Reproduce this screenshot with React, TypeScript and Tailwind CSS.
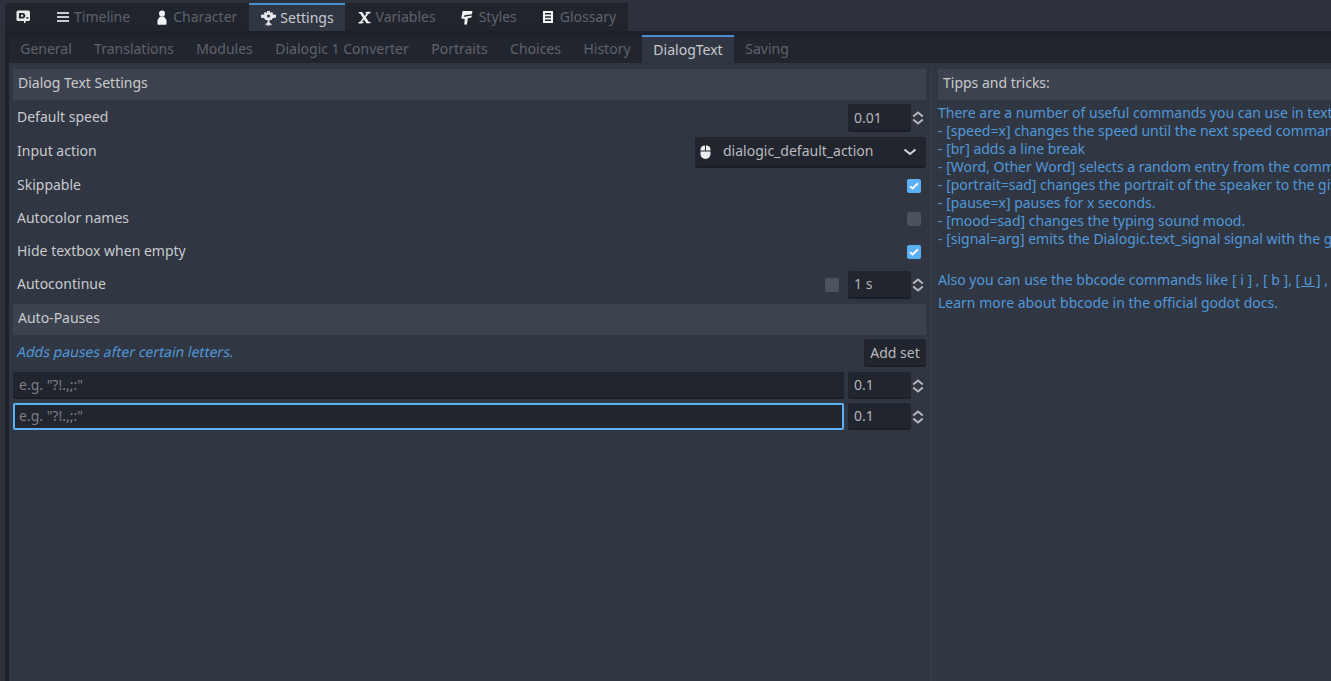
const mainTabs = [
  { label: "Timeline", icon: <TimelineIcon /> },
  { label: "Character", icon: <CharacterIcon /> },
  { label: "Settings", icon: <SettingsIcon />, active: true },
  { label: "Variables", icon: <VariablesIcon /> },
  { label: "Styles", icon: <StylesIcon /> },
  { label: "Glossary", icon: <GlossaryIcon /> },
];

const subTabs = [
  { label: "General", width: "w-[74px]" },
  { label: "Translations", width: "w-[102px]" },
  { label: "Modules", width: "w-[79px]" },
  { label: "Dialogic 1 Converter", width: "w-[156px]" },
  { label: "Portraits", width: "w-[79px]" },
  { label: "Choices", width: "w-[73px]" },
  { label: "History", width: "w-[70px]" },
  { label: "DialogText", width: "w-[92px]" },
  { label: "Saving", width: "w-[66px]" },
];

const tips = [
  "There are a number of useful commands you can use in texts:",
  "- [speed=x] changes the speed until the next speed command.",
  "- [br] adds a line break",
  "- [Word, Other Word] selects a random entry from the comma separated list.",
  "- [portrait=sad] changes the portrait of the speaker to the given one.",
  "- [pause=x] pauses for x seconds.",
  "- [mood=sad] changes the typing sound mood.",
  "- [signal=arg] emits the Dialogic.text_signal signal with the given argument.",
];

function LogoIcon() {
  return (
    <svg width="15" height="14" viewBox="0 0 15 14" fill="none">
      <path
        fillRule="evenodd"
        d="M2 0.5h10a2 2 0 0 1 2 2v7a1.500 1.500 0 0 1-1.500 1.500H9.500v2h-1.500v-2H2a1.500 1.500 0 0 1-1.500-1.500V2A1.500 1.500 0 0 1 2 0.500ZM3 3v5.500h3.500a2.750 2.750 0 0 0 0-5.500ZM5 4.700h1.300a1 1 0 0 1 0 2.100H5ZM10.500 7v1.800h1.800V7Z"
        fill="#e9eaeb"
      />
    </svg>
  );
}

function TimelineIcon() {
  return (
    <svg width="12" height="12" viewBox="0 0 12 12" fill="#c9cbce">
      <rect x="0" y="1" width="12" height="2" />
      <rect x="0" y="5" width="12" height="2" />
      <rect x="0" y="9" width="12" height="2" />
    </svg>
  );
}

function CharacterIcon() {
  return (
    <svg width="10" height="15" viewBox="0 0 10 15" fill="#f2f3f4">
      <circle cx="5" cy="3.500" r="3" />
      <path d="M3 6.500h4L9.500 10v4a.7.7 0 0 1-.7.700H1.200A.7.7 0 0 1 .5 14v-4Z" />
    </svg>
  );
}

function SettingsIcon() {
  return (
    <svg width="15" height="15" viewBox="0 0 15 15" fill="#e6e7e8">
      <path d="M6 0h3v2l1.800-1 1.400 1.300-.7 1.200L15 3.800v3l-3 .3-1.500 1.900h-6L3 7.100l-3-.3v-3l3.500-.3-.7-1.200L4.200 1 6 2Z" />
      <circle cx="7.500" cy="5" r="1.500" fill="#303642" />
      <path d="M6.500 9h2v2.500l2 1.500v1.500L8.500 13.500v1.300h-2v-1.300L4.500 14.500V13l2-1.500Z" />
    </svg>
  );
}

function VariablesIcon() {
  return (
    <svg width="13" height="13" viewBox="0 0 13 13" fill="#f2f3f4">
      <path d="M.8 1h3.300l2.700 4 2-3.100c-.5-.1-.9.200-1.200.4L7.200 1.300c.8-.6 1.800-.7 3-.5h2.300v1.400c-1 0-1.700.2-2.300 1L7.800 6.300l2.500 4c.4.500.9.700 1.700.7l.5 0v1.300H8.500L5.900 8.400l-2 2.700c.5.200.9 0 1.300-.3l.5 1c-.8.600-1.800.7-3 .6H.5v-1.400c1 0 1.700-.2 2.300-1L5 6.900 2.500 3c-.4-.5-.9-.7-1.700-.7Z" />
    </svg>
  );
}

function StylesIcon() {
  return (
    <svg width="12" height="15" viewBox="0 0 12 15" fill="#f2f3f4">
      <path d="M1.500 1h10l-.6 3.200L3.500 5.200 2.600 6.800h1.200l7-1.400-.3 2L6.800 8.300 6 14.500H3.200L3.800 9 .3 8.500Z" />
    </svg>
  );
}

function GlossaryIcon() {
  return (
    <svg width="10" height="12" viewBox="0 0 10 12" fill="#f2f3f4">
      <path
        fillRule="evenodd"
        d="M0 0h10v12H0ZM2 2v1.500h6V2ZM2 5.200v1.500h6V5.200ZM2 8.400v1.500h6V8.400Z"
      />
    </svg>
  );
}

function MouseIcon() {
  return (
    <svg width="11" height="14" viewBox="0 0 11 14" fill="#eceded">
      <path d="M5 .5v5H.5V4.500A4 4 0 0 1 5 .5Z" />
      <path d="M6 .5a4 4 0 0 1 4.500 4v1H6Z" />
      <path d="M.5 6.500h10V9a4.500 4.500 0 0 1-10 0Z" />
    </svg>
  );
}

function Chevron() {
  return (
    <svg width="14" height="8" viewBox="0 0 14 8" fill="none">
      <path d="M1.500 1.500 7 6l5.500-4.500" stroke="#d6d8da" strokeWidth="2" />
    </svg>
  );
}

function SpinArrows() {
  return (
    <svg width="12" height="14" viewBox="0 0 12 14" fill="none">
      <path d="M1.200 5.500 6 1.500l4.800 4M1.200 8.500 6 12.500l4.800-4" stroke="#b5b7ba" strokeWidth="2" />
    </svg>
  );
}

function Spin({ value, className }: { value: string; className: string }) {
  return (
    <div className="flex items-center">
      <div
        className={`flex w-[63px] items-center rounded-[3px] border-b-2 border-[#1b1e25] bg-[#21252e] pl-[6px] text-[#b3b5b8] ${className}`}
      >
        {value}
      </div>
      <div className="flex w-[15px] justify-center pr-[2px]">
        <SpinArrows />
      </div>
    </div>
  );
}

function Check({ on }: { on?: boolean }) {
  if (!on) return <div className="h-[14px] w-[14px] rounded-[2px] bg-[#4c525e]" />;
  return (
    <div className="flex h-[14px] w-[14px] items-center justify-center rounded-[2px] bg-[#5cb0f6]">
      <svg width="10" height="8" viewBox="0 0 10 8" fill="none">
        <path d="M1 4.200 3.600 6.500 9 1.200" stroke="#f4f7fa" strokeWidth="2" />
      </svg>
    </div>
  );
}

function Header({ children, className }: { children: string; className: string }) {
  return (
    <div className={`flex h-[31px] items-center bg-[#3d434e] pb-[4px] pl-[5px] text-[#c8cacd] ${className}`}>
      {children}
    </div>
  );
}

function CheckRow({ label, on, className }: { label: string; on?: boolean; className: string }) {
  return (
    <div className={`flex h-[29px] items-center justify-between pl-[4px] pr-[5px] ${className}`}>
      <span className="pb-[2px]">{label}</span>
      <Check on={on} />
    </div>
  );
}

function PauseRow({ focused, className }: { focused?: boolean; className: string }) {
  return (
    <div className={`flex h-[27px] items-center gap-[4px] ${className}`}>
      <div
        className={
          focused
            ? "flex h-[27px] flex-1 items-center rounded-[2px] border-2 border-[#5cb0f6] bg-[#21252e] pb-[2px] pl-[4px] text-[#7d8086]"
            : "flex h-[27px] flex-1 items-center rounded-[2px] border-b-2 border-[#1b1e25] bg-[#21252e] pl-[6px] text-[#7d8086]"
        }
      >
        e.g. "?!.,;:"
      </div>
      <Spin value="0.1" className="h-[27px]" />
    </div>
  );
}

export default function App() {
  return (
    <div className="flex h-[681px] w-[1331px] flex-col overflow-hidden bg-[#2c313c] font-['Noto_Sans',sans-serif] text-[14px] leading-[18px] text-[#c8cacd]">
      {/* editor tabs */}
      <div className="flex h-[31px] pl-[5px] pt-[3px]">
        <div className="flex h-[28px] w-[38px] items-center justify-center rounded-tl-[3px] bg-[#20242d] pr-[1px]">
          <LogoIcon />
        </div>
        {mainTabs.map((t) => (
          <div
            key={t.label}
            className={
              t.active
                ? "flex h-[28px] items-center gap-[4px] border-t-2 border-[#4a8fd0] bg-[#303642] pl-[12px] pr-[11px] text-[#c8cacd]"
                : "flex h-[28px] items-center gap-[4px] bg-[#20242d] px-[12px] text-[#5f636b]"
            }
          >
            <div className="flex w-[15px] justify-center">{t.icon}</div>
            {t.label}
          </div>
        ))}
      </div>
      <div className="ml-[5px] h-[4px] bg-[#1d2027]" />

      <div className="ml-[5px] flex flex-1 border-l-4 border-[#1d2027]">
        <div className="flex flex-1 flex-col overflow-hidden bg-[#303642]">
          {/* settings sub tabs */}
          <div className="flex h-[28px] bg-[#21252e]">
            {subTabs.map((t) => (
              <div
                key={t.label}
                className={
                  t.label === "DialogText"
                    ? `flex h-[28px] items-center justify-center whitespace-nowrap border-t-2 border-[#4a8fd0] bg-[#303642] text-[#c8cacd] ${t.width}`
                    : `flex h-[28px] items-center justify-center whitespace-nowrap text-[#5f636b] ${t.width}`
                }
              >
                {t.label}
              </div>
            ))}
          </div>

          <div className="flex flex-1 pt-[6px]">
            {/* left column */}
            <div className="ml-[4px] w-[913px] shrink-0">
              <Header className="">Dialog Text Settings</Header>
              <div className="mt-[4px] flex h-[28px] items-center justify-between pl-[4px]">
                <span className="pb-[2px]">Default speed</span>
                <Spin value="0.01" className="h-[28px] pt-[1px]" />
              </div>
              <div className="mt-[5px] flex h-[31px] items-center justify-between pl-[4px]">
                <span className="pb-[4px]">Input action</span>
                <div className="flex h-[31px] w-[231px] items-center rounded-[3px] border-b-2 border-[#1b1e25] bg-[#21252e] pl-[5px] pr-[9px]">
                  <MouseIcon />
                  <span className="ml-[12px] flex-1 pb-[1px] text-[#b9bbbe]">dialogic_default_action</span>
                  <Chevron />
                </div>
              </div>
              <CheckRow className="mt-[3px]" label="Skippable" on />
              <CheckRow className="mt-[4px]" label="Autocolor names" />
              <CheckRow className="mt-[4px]" label="Hide textbox when empty" on />
              <div className="mt-[4px] flex h-[29px] items-center pl-[4px]">
                <span className="flex-1 pb-[2px]">Autocontinue</span>
                <div className="mr-[9px]">
                  <Check />
                </div>
                <Spin value="1 s" className="h-[28px] pt-[1px]" />
              </div>
              <Header className="mt-[5px]">Auto-Pauses</Header>
              <div className="mt-[4px] flex h-[28px] items-center justify-between pl-[2px]">
                <span className="inline-block origin-bottom-left -skew-x-[12deg] pb-[2px] text-[#5099da]">
                  Adds pauses after certain letters.
                </span>
                <div className="flex h-[28px] w-[62px] items-center justify-center rounded-[3px] border-b-2 border-[#1b1e25] bg-[#21252e] pt-[1px] text-[#b9bbbe]">
                  Add set
                </div>
              </div>
              <PauseRow className="mt-[5px]" />
              <PauseRow className="mt-[4px]" focused />
            </div>

            {/* divider */}
            <div className="ml-[5px] w-[1px] bg-[#3c424d]" />

            {/* right column */}
            <div className="ml-[6px] min-w-0 flex-1">
              <Header className="">Tipps and tricks:</Header>
              <div className="mt-[4px] whitespace-nowrap text-[#5099da]">
                {tips.map((t) => (
                  <div key={t} className="h-[18px]">
                    {t}
                  </div>
                ))}
                <div className="mt-[23px]">
                  Also you can use the bbcode commands like [ i ] , [ b ], <span className="underline">[ u ]</span> , [ s ] and more.
                </div>
                <div className="mt-[5px]">Learn more about bbcode in the official godot docs.</div>
              </div>
            </div>
          </div>
        </div>
      </div>
    </div>
  );
}
